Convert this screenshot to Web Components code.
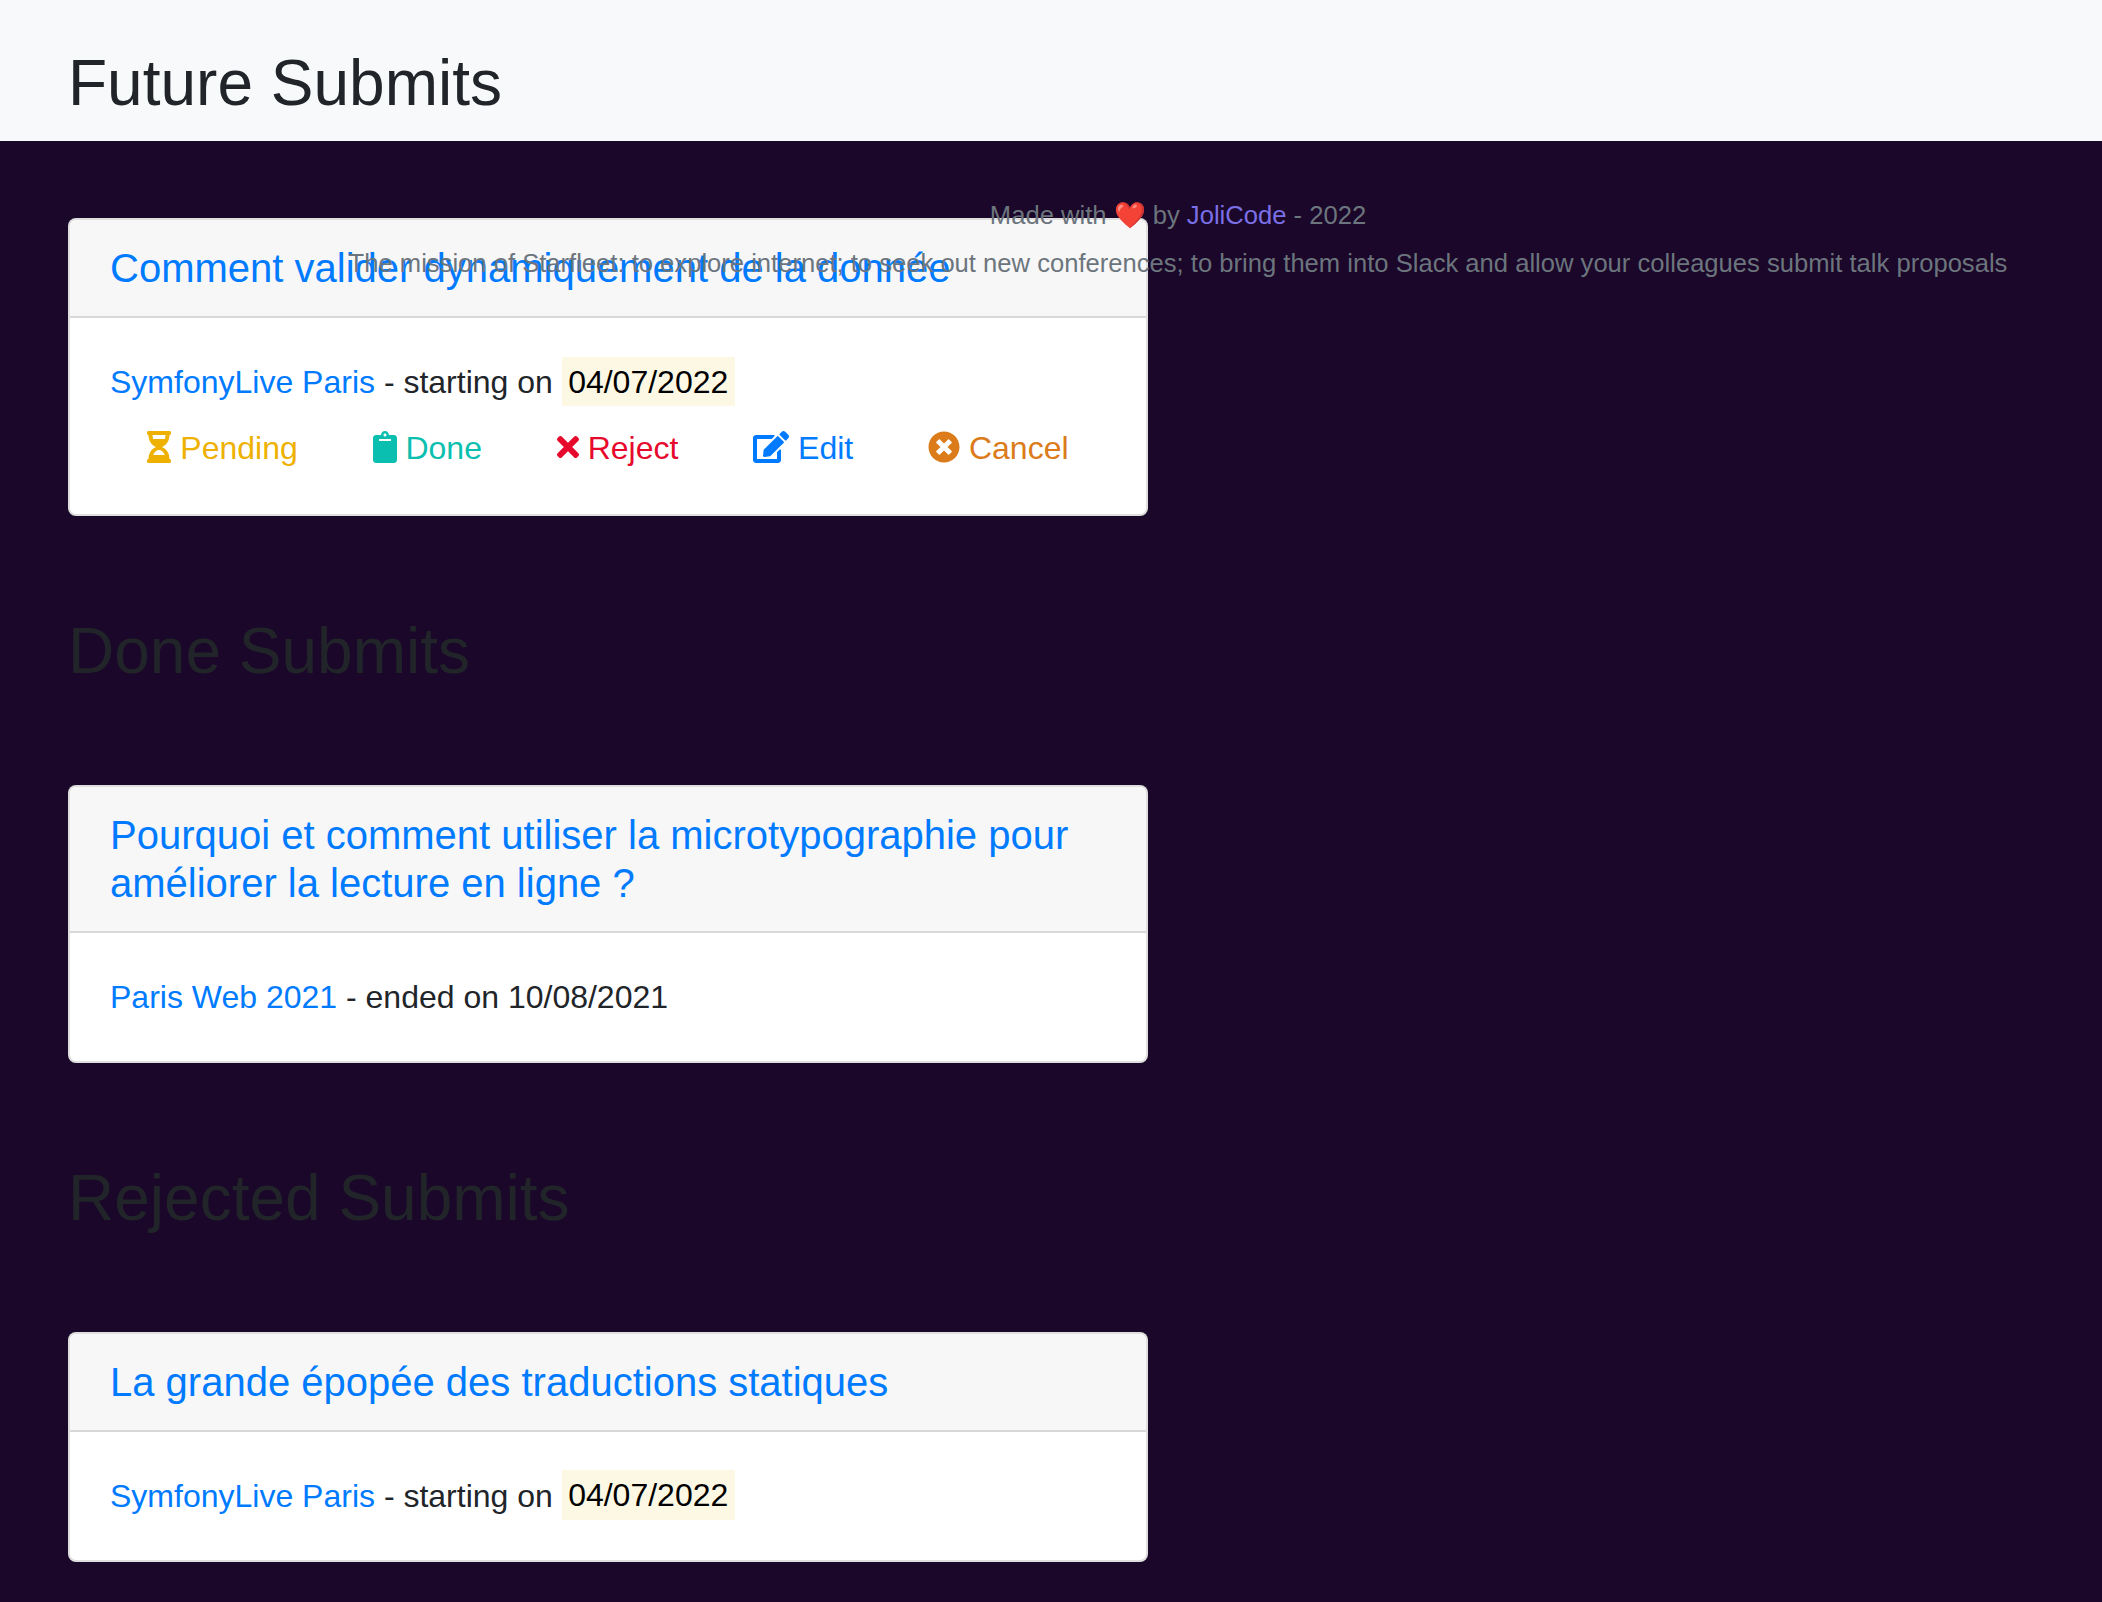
<!DOCTYPE html>
<html lang="en">
<head>
<meta charset="utf-8">
<title>Future Submits</title>
<style>
  html { background: #1a0729; }
  body {
    position: relative;
    margin: 0;
    font-family: "Liberation Sans", Arial, sans-serif;
    font-size: 32px;
    line-height: 1.5;
    color: #212529;
  }
</style>
</head>
<body>
<page-header>Future Submits</page-header>

<page-main>
  <submit-card heading="Comment valider dynamiquement de la donnée">
    <conference-line name="SymfonyLive Paris">- starting on <mark-date>04/07/2022</mark-date></conference-line>
    <action-row>
      <submit-action icon="hourglass" color="#eeb100" label="Pending"></submit-action>
      <submit-action icon="clipboard" color="#0bbfb0" label="Done"></submit-action>
      <submit-action icon="times" color="#e6092c" label="Reject"></submit-action>
      <submit-action icon="edit" color="#007bff" label="Edit"></submit-action>
      <submit-action icon="times-circle" color="#db7b1a" label="Cancel"></submit-action>
    </action-row>
  </submit-card>

  <section-title>Done Submits</section-title>

  <submit-card heading="Pourquoi et comment utiliser la microtypographie pour améliorer la lecture en ligne ?">
    <conference-line name="Paris Web 2021">- ended on 10/08/2021</conference-line>
  </submit-card>

  <section-title>Rejected Submits</section-title>

  <submit-card heading="La grande épopée des traductions statiques">
    <conference-line name="SymfonyLive Paris">- starting on <mark-date>04/07/2022</mark-date></conference-line>
  </submit-card>
</page-main>

<site-footer></site-footer>

<script>
const ICONS = {
  'hourglass': ['0 0 384 512', 'M360 0H24C10.745 0 0 10.745 0 24v16c0 13.255 10.745 24 24 24 0 90.965 51.016 167.734 120.842 192C75.016 280.266 24 357.035 24 448c-13.255 0-24 10.745-24 24v16c0 13.255 10.745 24 24 24h336c13.255 0 24-10.745 24-24v-16c0-13.255-10.745-24-24-24 0-90.965-51.016-167.734-120.842-192C308.984 231.734 360 154.965 360 64c13.255 0 24-10.745 24-24V24c0-13.255-10.745-24-24-24zm-75.078 384H99.08c17.059-46.797 52.096-80 92.92-80 40.821 0 75.862 33.196 92.922 80zm.019-256H99.078C91.988 108.548 88 86.748 88 64h208c0 22.805-3.987 44.587-11.059 64z'],
  'clipboard': ['0 0 384 512', 'M384 112v352c0 26.51-21.49 48-48 48H48c-26.51 0-48-21.49-48-48V112c0-26.51 21.49-48 48-48h80c0-35.29 28.71-64 64-64s64 28.71 64 64h80c26.51 0 48 21.49 48 48zM192 40c-13.255 0-24 10.745-24 24s10.745 24 24 24 24-10.745 24-24-10.745-24-24-24m96 114v-20a6 6 0 0 0-6-6H102a6 6 0 0 0-6 6v20a6 6 0 0 0 6 6h180a6 6 0 0 0 6-6z'],
  'times': ['0 0 352 512', 'M242.72 256l100.07-100.07c12.28-12.28 12.28-32.19 0-44.48l-22.24-22.24c-12.28-12.28-32.19-12.28-44.48 0L176 189.28 75.93 89.21c-12.28-12.28-32.19-12.28-44.48 0L9.21 111.45c-12.28 12.28-12.28 32.19 0 44.48L109.28 256 9.21 356.07c-12.28 12.28-12.28 32.19 0 44.48l22.24 22.24c12.28 12.28 32.2 12.28 44.48 0L176 322.72l100.07 100.07c12.28 12.28 32.2 12.28 44.48 0l22.24-22.24c12.28-12.28 12.28-32.19 0-44.48L242.72 256z'],
  'edit': ['0 0 576 512', 'M402.6 83.2l90.2 90.2c3.8 3.8 3.8 10 0 13.8L274.4 405.6l-92.8 10.3c-12.4 1.4-22.9-9.1-21.5-21.5l10.3-92.8L388.8 83.2c3.8-3.8 10-3.8 13.8 0zm162-22.9l-48.8-48.8c-15.2-15.2-39.9-15.2-55.2 0l-35.4 35.4c-3.8 3.8-3.8 10 0 13.8l90.2 90.2c3.8 3.8 10 3.8 13.8 0l35.4-35.4c15.2-15.3 15.2-40 0-55.2zM384 346.2V448H64V128h229.8c3.2 0 6.2-1.3 8.5-3.5l40-40c7.6-7.6 2.2-20.5-8.5-20.5H48C21.5 64 0 85.5 0 112v352c0 26.5 21.5 48 48 48h352c26.5 0 48-21.5 48-48V306.2c0-10.7-12.9-16-20.5-8.5l-40 40c-2.2 2.3-3.5 5.3-3.5 8.5z'],
  'times-circle': ['0 0 512 512', 'M256 8C119 8 8 119 8 256s111 248 248 248 248-111 248-248S393 8 256 8zm121.6 313.1c4.7 4.7 4.7 12.3 0 17L338 377.6c-4.7 4.7-12.3 4.7-17 0L256 312l-65.1 65.6c-4.7 4.7-12.3 4.7-17 0L134.4 338c-4.7-4.7-4.7-12.3 0-17l65.6-65-65.6-65.1c-4.7-4.7-4.7-12.3 0-17l39.6-39.6c4.7-4.7 12.3-4.7 17 0l65 65.7 65.1-65.6c4.7-4.7 12.3-4.7 17 0l39.6 39.6c4.7 4.7 4.7 12.3 0 17L312 256l65.6 65.1z']
};

class PageHeader extends HTMLElement {
  constructor() {
    super();
    this.attachShadow({ mode: 'open' });
    this.shadowRoot.innerHTML = `
      <style>
        :host {
          display: block;
          height: 141px;
          box-sizing: border-box;
          padding: 45px 68px 0;
          background: #f8f9fa;
        }
        h1 { margin: 0; font-size: 64px; font-weight: 400; line-height: 1.2; }
      </style>
      <h1><slot></slot></h1>
    `;
  }
}

class PageMain extends HTMLElement {
  constructor() {
    super();
    this.attachShadow({ mode: 'open' });
    this.shadowRoot.innerHTML = `
      <style>
        :host { display: block; padding: 77px 68px 0; }
      </style>
      <slot></slot>
    `;
  }
}

class SectionTitle extends HTMLElement {
  constructor() {
    super();
    this.attachShadow({ mode: 'open' });
    this.shadowRoot.innerHTML = `
      <style>
        :host { display: block; margin: 97px 0 95px; }
        h1 { margin: 0; font-size: 64px; font-weight: 400; line-height: 1.2; }
      </style>
      <h1><slot></slot></h1>
    `;
  }
}

class SubmitCard extends HTMLElement {
  constructor() {
    super();
    this.attachShadow({ mode: 'open' });
    this.shadowRoot.innerHTML = `
      <style>
        :host {
          display: block;
          width: 1080px;
          box-sizing: border-box;
          background: #fff;
          border: 2px solid rgba(0, 0, 0, .125);
          border-radius: 8px;
        }
        header {
          padding: 24px 40px;
          background: #f7f7f7;
          border-bottom: 2px solid rgba(0, 0, 0, .125);
          border-radius: 6px 6px 0 0;
        }
        h5 { margin: 0; font-size: 40px; font-weight: 400; line-height: 48px; }
        a { color: #007bff; text-decoration: none; }
        .body { padding: 40px; }
      </style>
      <header><h5><a></a></h5></header>
      <div class="body"><slot></slot></div>
    `;
    this.shadowRoot.querySelector('a').textContent = this.getAttribute('heading');
  }
}

class ConferenceLine extends HTMLElement {
  constructor() {
    super();
    this.attachShadow({ mode: 'open' });
    this.shadowRoot.innerHTML = `
      <style>
        :host { display: block; }
        a { color: #007bff; text-decoration: none; }
      </style>
      <a></a> <slot></slot>
    `;
    this.shadowRoot.querySelector('a').textContent = this.getAttribute('name');
  }
}

class MarkDate extends HTMLElement {
  constructor() {
    super();
    this.attachShadow({ mode: 'open' });
    this.shadowRoot.innerHTML = `
      <style>
        :host { display: inline; padding: 7.4px 6.4px 6.4px; background: #fcf8e3; color: #000; }
      </style>
      <slot></slot>
    `;
  }
}

class ActionRow extends HTMLElement {
  constructor() {
    super();
    this.attachShadow({ mode: 'open' });
    this.shadowRoot.innerHTML = `
      <style>
        :host { display: flex; justify-content: space-around; margin-top: 18px; height: 50px; }
      </style>
      <slot></slot>
    `;
  }
}

class SubmitAction extends HTMLElement {
  constructor() {
    super();
    this.attachShadow({ mode: 'open' });
    const [viewBox, path] = ICONS[this.getAttribute('icon')];
    this.shadowRoot.innerHTML = `
      <style>
        :host { display: inline-block; color: ${this.getAttribute('color')}; white-space: nowrap; }
        svg { height: 32px; width: auto; vertical-align: -4px; fill: currentColor; }
      </style>
      <svg viewBox="${viewBox}" aria-hidden="true"><path d="${path}"/></svg>
      <span>${this.getAttribute('label')}</span>
    `;
  }
}

class SiteFooter extends HTMLElement {
  constructor() {
    super();
    this.attachShadow({ mode: 'open' });
    this.shadowRoot.innerHTML = `
      <style>
        :host {
          position: absolute;
          top: 196px;
          left: 200px;
          width: 1956px;
          text-align: center;
          color: #6c757d;
          font-size: 25.6px;
          line-height: 1.5;
          white-space: nowrap;
        }
        p { margin: 0 0 10px; }
        a { color: #7a6fe6; text-decoration: none; }
      </style>
      <p>Made with ❤️ by <a>JoliCode</a> - 2022</p>
      <p>The mission of Starfleet: to explore internet; to seek out new conferences; to bring them into Slack and allow your colleagues submit talk proposals</p>
    `;
  }
}

customElements.define('page-header', PageHeader);
customElements.define('page-main', PageMain);
customElements.define('section-title', SectionTitle);
customElements.define('submit-card', SubmitCard);
customElements.define('conference-line', ConferenceLine);
customElements.define('mark-date', MarkDate);
customElements.define('action-row', ActionRow);
customElements.define('submit-action', SubmitAction);
customElements.define('site-footer', SiteFooter);
</script>
</body>
</html>
